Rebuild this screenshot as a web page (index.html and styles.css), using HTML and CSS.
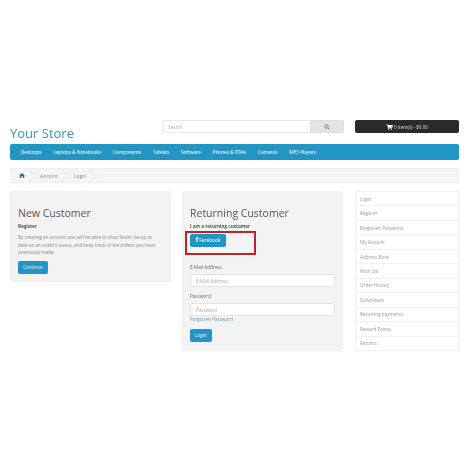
FILE: index.html
```html
<!DOCTYPE html>
<html lang="en">
<head>
    <meta charset="UTF-8">
    <meta name="viewport" content="width=device-width, initial-scale=1.0">
    <title>Account Login</title>
    <link rel="stylesheet" href="styles.css">
</head>
<body>
    <div class="container">
        <header class="header">
            <h1 class="logo">Your Store</h1>
            <div class="search">
                <input class="search-input" type="text" placeholder="Search">
                <button class="search-btn" type="button">
                    <svg width="6" height="6" viewBox="0 0 12 12"><circle cx="5" cy="5" r="3.5" fill="none" stroke="#777" stroke-width="2"/><path d="M8 8l3 3" stroke="#777" stroke-width="2"/></svg>
                </button>
            </div>
            <button class="cart" type="button">
                <svg width="7" height="6" viewBox="0 0 14 12"><path d="M0 0h3l.6 2H14l-1.5 5.5H5L5.400 9H12v1H4.400L2.300 1H0z" fill="#fff"/><circle cx="5.500" cy="11" r="1" fill="#fff"/><circle cx="11" cy="11" r="1" fill="#fff"/></svg>
                0 item(s) - $0.00
            </button>
        </header>

        <nav class="menu">
            <a>Desktops</a>
            <a>Laptops &amp; Notebooks</a>
            <a>Components</a>
            <a>Tablets</a>
            <a>Software</a>
            <a>Phones &amp; PDAs</a>
            <a>Cameras</a>
            <a>MP3 Players</a>
        </nav>

        <ul class="breadcrumb">
            <li>
                <svg width="6" height="5" viewBox="0 0 12 10"><path d="M6 0l6 5h-1.500v5H7.500V6.500h-3V10H1.500V5H0z" fill="#2b6f8f"/></svg>
            </li>
            <li>Account</li>
            <li>Login</li>
        </ul>

        <div class="content">
            <section class="well well-new">
                <h2>New Customer</h2>
                <p class="lead">Register</p>
                <p class="text">By creating an account you will be able to shop faster, be up to date on an order's status, and keep track of the orders you have previously made.</p>
                <a class="btn">Continue</a>
            </section>

            <section class="well well-login">
                <h2>Returning Customer</h2>
                <p class="lead">I am a returning customer</p>
                <a class="btn btn-fb"><b>f</b>Facebook</a>
                <label class="field-label">E-Mail Address</label>
                <input class="field" type="text" placeholder="E-Mail Address">
                <label class="field-label">Password</label>
                <input class="field field-pass" type="text" placeholder="Password">
                <a class="forgot">Forgotten Password</a>
                <a class="btn">Login</a>
                <div class="highlight"></div>
            </section>

            <aside class="list">
                <a>Login</a>
                <a>Register</a>
                <a>Forgotten Password</a>
                <a>My Account</a>
                <a>Address Book</a>
                <a>Wish List</a>
                <a>Order History</a>
                <a>Downloads</a>
                <a>Recurring payments</a>
                <a>Reward Points</a>
                <a>Returns</a>
            </aside>
        </div>
    </div>
</body>
</html>
```

FILE: styles.css
```css
body {
    margin: 0;
    background: #fff;
    font-family: "Open Sans", "Liberation Sans", sans-serif;
    font-size: 4.6px;
    color: #666;
}

.container {
    width: 449px;
    margin-left: 10px;
    padding-top: 120px;
    filter: blur(0.4px);
}

.header {
    display: flex;
    height: 24px;
}

.logo {
    width: 153px;
    margin: 3px 0 0;
    font-size: 13px;
    line-height: 20px;
    font-weight: 400;
    color: #3f8fb0;
}

.search {
    display: flex;
    width: 181px;
    height: 13px;
}

.search-input {
    flex: 1;
    min-width: 0;
    padding: 0 4px;
    border: 1px solid #e6e6e6;
    border-right: 0;
    border-radius: 2px 0 0 2px;
    font: inherit;
    box-sizing: border-box;
}

.search-btn {
    display: flex;
    justify-content: center;
    align-items: center;
    width: 34px;
    padding: 0;
    border: 1px solid #ddd;
    border-radius: 0 2px 2px 0;
    background: #e4e4e4;
}

.cart {
    display: flex;
    justify-content: center;
    align-items: center;
    gap: 1px;
    width: 104px;
    height: 13px;
    margin-left: 11px;
    padding: 0;
    border: 0;
    border-radius: 2px;
    background: #2a2a2a;
    color: #ddd;
    font: inherit;
}

.menu {
    display: flex;
    gap: 11.8px;
    height: 16px;
    align-items: center;
    padding-left: 11px;
    border-radius: 2px;
    background: #2295c4;
    color: #e4f2f8;
    font-weight: 600;
}

.breadcrumb {
    display: flex;
    align-items: center;
    height: 15px;
    margin: 8px 0;
    padding: 0 0 0 8px;
    list-style: none;
    border: 1px solid #eee;
    border-radius: 2px;
    background: #f5f5f5;
    box-sizing: border-box;
    overflow: hidden;
}

.breadcrumb li {
    display: flex;
    align-items: center;
    height: 13px;
    padding-right: 17px;
    color: #6a94a8;
    position: relative;
}

.breadcrumb li:first-child {
    padding-right: 15px;
}

.breadcrumb li::after {
    content: "";
    position: absolute;
    right: 8px;
    top: 2px;
    width: 9px;
    height: 9px;
    border-top: 1px solid #e8e8e8;
    border-right: 1px solid #e8e8e8;
    transform: rotate(45deg);
}

.breadcrumb li:first-child::after {
    right: 6px;
}

.content {
    display: flex;
    align-items: flex-start;
}

.well {
    position: relative;
    width: 161px;
    padding: 15px 8px 0 7px;
    border: 1px solid #f0f0f0;
    border-radius: 2px;
    background: #f3f3f3;
    box-sizing: border-box;
}

.well-new {
    height: 91px;
    margin-right: 11px;
}

.well-login {
    height: 160px;
    margin-right: 12px;
}

.well h2 {
    margin: 0;
    font-size: 10.5px;
    line-height: 12px;
    font-weight: 400;
    color: #555;
}

.lead {
    margin: 4px 0 4px;
    line-height: 7px;
    font-weight: 700;
    color: #555;
}

.text {
    margin: 1px 0 4px;
    line-height: 7.5px;
    color: #888;
}

.btn {
    display: inline-block;
    padding: 0 5px;
    height: 13px;
    line-height: 13px;
    border-radius: 2px;
    background: #2295c4;
    color: #e4f2f8;
}

.btn-fb {
    display: block;
    width: 36px;
    padding: 0;
    margin-bottom: 17px;
    text-align: center;
    font-weight: 600;
}

.btn-fb b {
    font-size: 6px;
    margin-right: 1px;
}

.field-label {
    display: block;
    line-height: 7px;
    margin-bottom: 3px;
    color: #666;
}

.field {
    display: block;
    width: 145px;
    height: 13px;
    margin-bottom: 6px;
    padding: 0 5px;
    border: 1px solid #e4e4e4;
    border-radius: 2px;
    background: #fff;
    font: inherit;
    box-sizing: border-box;
}

.field-pass {
    margin-bottom: 0;
}

.field::placeholder,
.search-input::placeholder {
    color: #aaa;
}

.forgot {
    display: block;
    line-height: 7px;
    margin-bottom: 6px;
    color: #5f9db8;
}

.highlight {
    position: absolute;
    left: 2px;
    top: 39px;
    width: 71px;
    height: 24px;
    border: 2px solid #c2202f;
    box-sizing: border-box;
}

.list {
    display: flex;
    flex-direction: column;
    width: 104px;
    height: 160px;
    border: 1px solid #f0f0f0;
    box-sizing: border-box;
}

.list a {
    flex: 1;
    display: flex;
    align-items: center;
    padding-left: 4px;
    border-bottom: 1px solid #f0f0f0;
    color: #999;
}

.list a:last-child {
    border-bottom: 0;
}
```
